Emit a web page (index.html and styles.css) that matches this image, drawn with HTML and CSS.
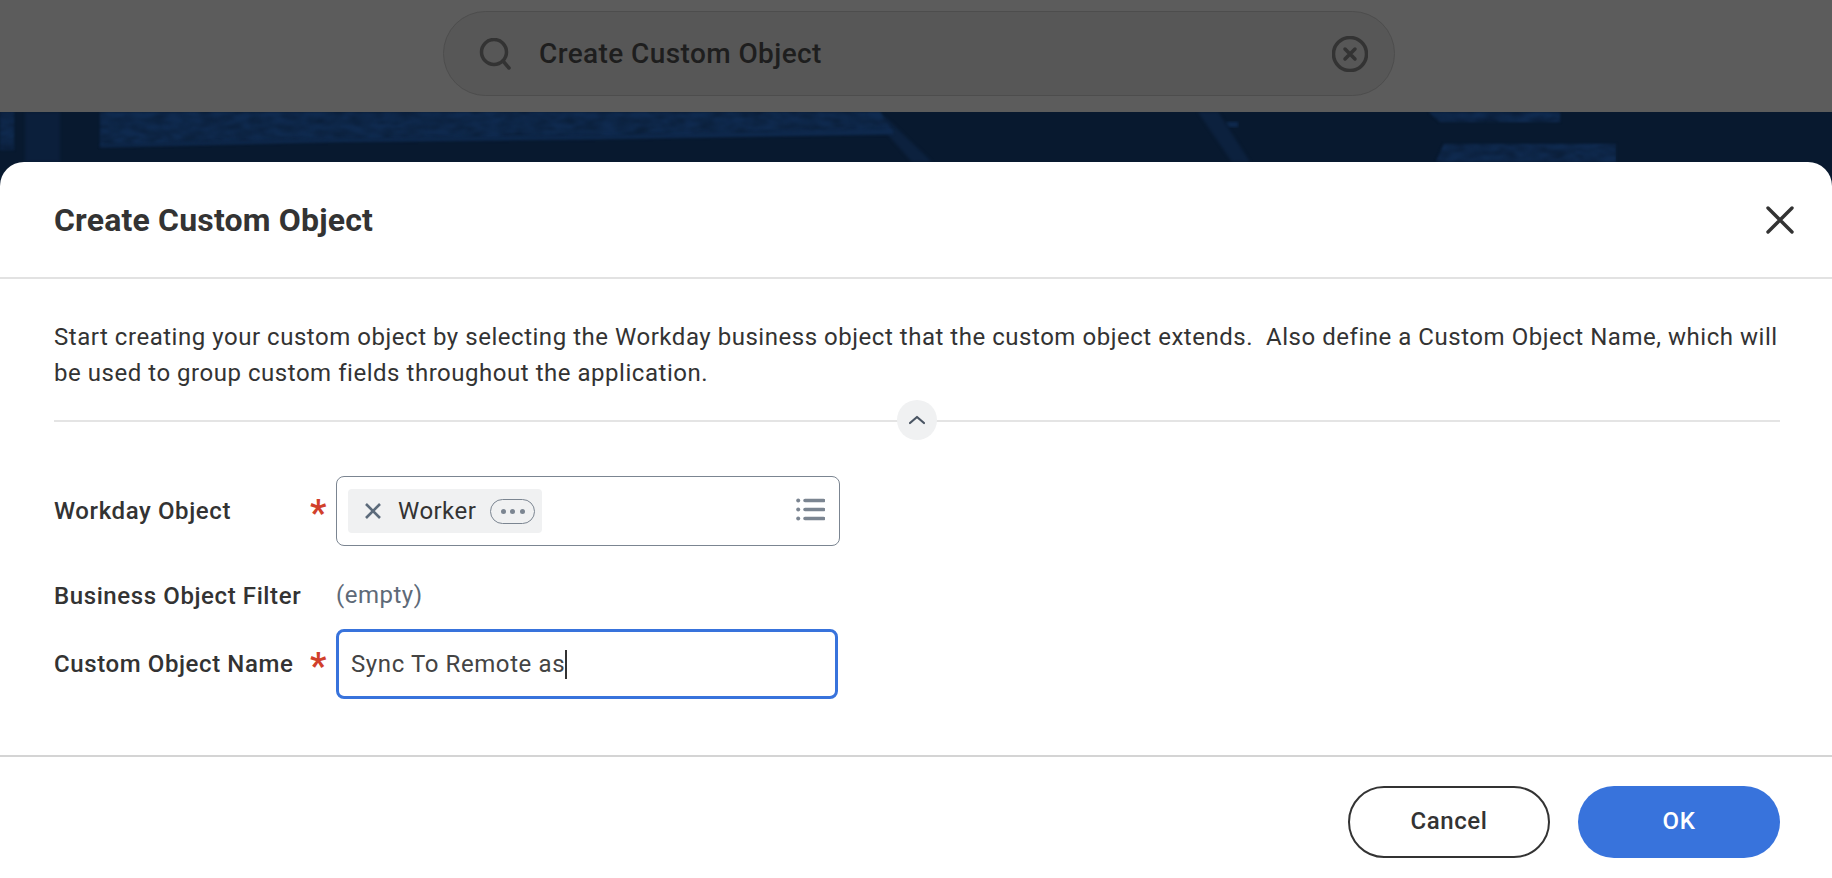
FILE: index.html
```html
<!DOCTYPE html>
<html lang="en">
<head>
<meta charset="utf-8">
<title>Create Custom Object</title>
<link rel="stylesheet" href="styles.css">
</head>
<body>
<div class="page">
  <header class="topbar">
    <div class="search">
      <svg class="search-icon" viewBox="0 0 32 32"><circle cx="15" cy="14" r="12.5"/><path d="M24 23l6 7"/></svg>
      <span class="search-text">Create Custom Object</span>
      <svg class="search-clear" viewBox="0 0 36 36"><circle cx="18" cy="18" r="16.5"/><path d="M13 13l10 10M23 13L13 23"/></svg>
    </div>
  </header>
  <div class="hero">
    <svg class="hero-art" viewBox="0 0 1832 50">
      <defs>
        <filter id="grain" x="0" y="0" width="100%" height="100%" color-interpolation-filters="sRGB">
          <feTurbulence type="fractalNoise" baseFrequency="0.06 0.16" numOctaves="2" seed="7" result="n"/>
          <feColorMatrix in="n" type="matrix" values="0 0 0 0 0  0 0 0 0 0  0 0 0 0 0  1.4 1.4 0 0 -0.8" result="a"/>
          <feComposite in="SourceGraphic" in2="a" operator="in"/>
          <feGaussianBlur stdDeviation="1.2"/>
        </filter>
        <filter id="soft" x="-5%" y="-20%" width="110%" height="140%" color-interpolation-filters="sRGB">
          <feGaussianBlur stdDeviation="1.5"/>
        </filter>
      </defs>
      <g filter="url(#soft)">
        <path class="tone-mid" d="M100 0H880L893 22L600 26L330 29L100 35Z"/>
        <path class="tone-low" d="M25 0H60V50H25Z"/>
        <path class="tone-low" d="M0 0H14V38H0Z"/>
        <path class="tone-beam" d="M868 0H880L932 50H912Z"/>
        <path class="tone-beam" d="M1198 0H1218L1250 50H1232Z"/>
        <path class="tone-low" d="M1429 0H1560V10H1440Z"/>
        <path class="tone-low" d="M1444 32H1616V50H1436Z"/>
      </g>
      <g filter="url(#grain)">
        <path class="tone-high" d="M100 0H880L893 20L600 24L330 27L100 33Z"/>
        <path class="tone-high" d="M0 0H14V38H0Z"/>
        <path class="tone-high" d="M1429 0H1560V10H1440Z"/>
        <path class="tone-high" d="M1444 32H1616V50H1436Z"/>
      </g>
      <path class="tone-line" filter="url(#soft)" d="M100 33L330 27L600 24L893 18V22L600 27L330 30L100 35Z"/>
      <path class="tone-line" filter="url(#soft)" d="M1226 10H1238V15H1229Z"/>
    </svg>
  </div>
  <section class="modal">
    <div class="modal-head">
      <h1 class="modal-title">Create Custom Object</h1>
      <svg class="close" viewBox="0 0 28 28"><path d="M2 2l24 24M26 2L2 26"/></svg>
    </div>
    <div class="modal-body">
      <p class="desc">Start creating your custom object by selecting the Workday business object that the custom object extends.&nbsp; Also define a Custom Object Name, which will be used to group custom fields throughout the application.</p>
      <div class="divider">
        <span class="collapse"><svg viewBox="0 0 16 10"><path d="M1 8l7-6 7 6"/></svg></span>
      </div>
      <div class="form">
        <div class="row">
          <label class="label">Workday Object<span class="req">*</span></label>
          <div class="input multi">
            <span class="chip">
              <svg class="chip-x" viewBox="0 0 16 16"><path d="M1 1l14 14M15 1L1 15"/></svg>
              <span class="chip-text">Worker</span>
              <span class="chip-more"><i></i><i></i><i></i></span>
            </span>
            <svg class="list-icon" viewBox="0 0 29 23"><circle cx="2.2" cy="2.5" r="2"/><circle cx="2.2" cy="11.5" r="2"/><circle cx="2.2" cy="20.5" r="2"/><path d="M9 2.5h18.5M9 11.5h18.5M9 20.5h18.5"/></svg>
          </div>
        </div>
        <div class="row row-filter">
          <label class="label">Business Object Filter</label>
          <span class="empty">(empty)</span>
        </div>
        <div class="row">
          <label class="label">Custom Object Name<span class="req">*</span></label>
          <div class="input focused"><span class="value">Sync To Remote as</span><span class="caret"></span></div>
        </div>
      </div>
    </div>
    <div class="modal-foot">
      <button class="btn btn-cancel">Cancel</button>
      <button class="btn btn-ok">OK</button>
    </div>
  </section>
</div>
</body>
</html>
```
FILE: styles.css
```css
* { box-sizing: border-box; }
html, body { margin: 0; height: 100%; overflow: hidden; }
body { font-family: Roboto, "Liberation Sans", sans-serif; color: #333; background: #fff; }
.page { position: relative; height: 878px; display: flex; flex-direction: column; }
.topbar { height: 112px; background: #5c5c5c; padding: 11px 0 0 443px; flex: none; }
.search { width: 952px; height: 85px; border: 1px solid #4d4d4d; border-radius: 43px; background: #575757; display: flex; align-items: center; padding: 0 26px 0 35px; }
.search-icon { width: 32px; height: 32px; fill: none; stroke: #333; stroke-width: 3.5; stroke-linecap: round; flex: none; }
.search-text { margin-left: 28px; font-size: 28px; font-weight: 500; letter-spacing: 0.4px; color: #1e1e1e; flex: 1; }
.search-clear { width: 36px; height: 36px; fill: none; stroke: #333; stroke-width: 3.5; stroke-linecap: round; flex: none; }
.hero { flex: 1; background: #08192f; position: relative; overflow: hidden; }
.hero-art { display: block; width: 1832px; height: 50px; }
.tone-low { fill: #0b1f3b; }
.tone-mid { fill: #0b203c; }
.tone-beam { fill: #0c213e; }
.tone-high { fill: #0f2a4f; }
.tone-line { fill: #0f2a4f; }
.modal { position: absolute; left: 0; right: 0; top: 162px; bottom: 0; background: #fff; border-radius: 24px 24px 0 0; display: flex; flex-direction: column; }
.modal-head { height: 117px; border-bottom: 2px solid #e2e2e2; display: flex; align-items: center; justify-content: space-between; padding: 0 38px 0 54px; flex: none; }
.modal-title { margin: 0; font-size: 32px; font-weight: 700; letter-spacing: 0.18px; color: #333; }
.close { width: 28px; height: 28px; fill: none; stroke: #333; stroke-width: 3.4; stroke-linecap: round; }
.modal-body { flex: 1; padding: 40px 52px 0 54px; }
.desc { margin: 0; font-size: 24px; line-height: 36px; letter-spacing: 0.53px; color: #333; }
.divider { margin-top: 29px; height: 2px; background: #e4e4e4; position: relative; }
.collapse { position: absolute; left: 843px; top: -20px; width: 40px; height: 40px; border-radius: 50%; background: #f0f1f2; display: flex; align-items: center; justify-content: center; }
.collapse svg { width: 16px; height: 10px; fill: none; stroke: #4a5563; stroke-width: 2.2; stroke-linecap: round; stroke-linejoin: round; }
.form { margin-top: 54px; display: flex; flex-direction: column; }
.row { display: flex; align-items: center; }
.row-filter { height: 83px; padding-top: 14px; }
.label { width: 282px; flex: none; font-size: 24px; font-weight: 500; letter-spacing: 0.6px; color: #333; display: flex; justify-content: space-between; padding: 2px 9px 0 0; }
.req { color: #d1402b; font-size: 36px; line-height: 28px; font-weight: 700; padding-top: 2px; }
.input { height: 70px; border-radius: 8px; display: flex; align-items: center; }
.multi { width: 504px; border: 1px solid #7b8591; padding: 0 14px 0 11px; justify-content: space-between; }
.chip { height: 44px; width: 194px; background: #f0f1f2; border-radius: 4px; display: flex; align-items: center; padding-left: 17px; }
.chip-x { width: 16px; height: 16px; fill: none; stroke: #5c6b7b; stroke-width: 2.6; flex: none; }
.chip-text { margin-left: 17px; font-size: 24px; letter-spacing: 0.45px; color: #333; }
.chip-more { margin-left: 14px; width: 45px; height: 25px; border: 1px solid #7b8591; border-radius: 13px; display: flex; align-items: center; justify-content: center; gap: 4.5px; }
.chip-more i { width: 5px; height: 5px; border-radius: 50%; background: #7b8591; }
.list-icon { width: 29px; height: 23px; fill: #7b8591; margin-top: -3px; flex: none; }
.list-icon path { fill: none; stroke: #7b8591; stroke-width: 3.6; stroke-linecap: round; }
.empty { font-size: 24px; letter-spacing: 0.5px; color: #5e6a78; }
.focused { width: 502px; border: 3px solid #3873dc; padding-left: 12px; }
.value { font-size: 24px; letter-spacing: 0.6px; color: #444; }
.caret { width: 2px; height: 29px; background: #333; }
.modal-foot { height: 123px; border-top: 2px solid #d4d4d4; display: flex; justify-content: flex-end; align-items: flex-start; gap: 28px; padding: 29px 52px 0 0; flex: none; }
.btn { width: 202px; height: 72px; border-radius: 36px; padding: 0 0 3px; font: 500 24px Roboto, "Liberation Sans", sans-serif; letter-spacing: 0.6px; }
.btn-cancel { background: #fff; border: 2px solid #333; color: #333; }
.btn-ok { background: #3873dc; border: 0; color: #fff; }
```
